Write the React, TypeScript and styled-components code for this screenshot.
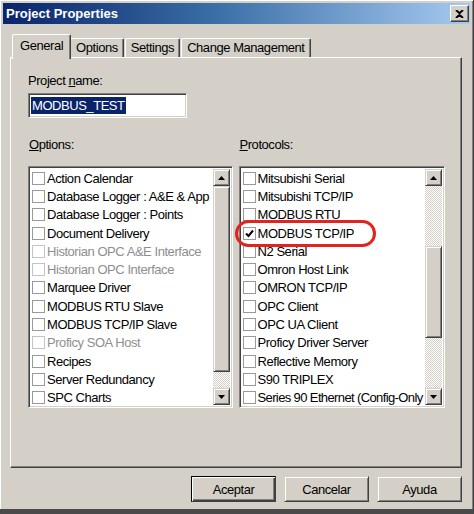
import styled, { createGlobalStyle } from "styled-components";

const GlobalStyle = createGlobalStyle`
  html, body {
    margin: 0;
    padding: 0;
    background: #d4d0c8;
  }
  body {
    font-family: "Liberation Sans", Arial, sans-serif;
    font-size: 13px;
    letter-spacing: -0.45px;
    color: #000;
  }
  * {
    box-sizing: border-box;
  }
`;

const Window = styled.div`
  width: 474px;
  height: 514px;
  padding: 3px 3px 0 3px;
  background: #d4d0c8;
  border-right: 1px solid #404040;
  border-bottom: 5px solid #4a4a4a;
  box-shadow: inset 1px 1px #ffffff, inset -1px 0 #808080;
  display: flex;
  flex-direction: column;
`;

const TitleBar = styled.div`
  height: 21px;
  display: flex;
  align-items: center;
  justify-content: space-between;
  padding: 0 1px 0 3px;
  background: linear-gradient(to right, #0a246a 0%, #3a6ea5 45%, #a6caf0 100%);
`;

const TitleText = styled.span`
  color: #fff;
  font-weight: bold;
  font-size: 13px;
  letter-spacing: 0;
`;

const CloseButton = styled.div`
  width: 19px;
  height: 17px;
  background: #d4d0c8;
  border-top: 1px solid #fff;
  border-left: 1px solid #fff;
  border-right: 1px solid #404040;
  border-bottom: 1px solid #404040;
  box-shadow: inset -1px -1px #808080;
  display: flex;
  align-items: center;
  justify-content: center;
`;

const Body = styled.div`
  padding: 10px 8px 0 7px;
  display: flex;
  flex-direction: column;
`;

const TabRow = styled.div`
  height: 23px;
  display: flex;
  align-items: flex-end;
  padding-left: 4px;
  position: relative;
  z-index: 1;
`;

const Tab = styled.div<{ $active?: boolean }>`
  height: ${(p) => (p.$active ? "25px" : "19px")};
  margin: ${(p) => (p.$active ? "0 -1px -2px -2px" : "0 1px 0 0")};
  padding: ${(p) => (p.$active ? "3px 7px 0 7px" : "1px 5px 0 5px")};
  background: #d4d0c8;
  border-top: 1px solid #fff;
  border-left: 1px solid #fff;
  border-right: 1px solid #404040;
  border-radius: 2px 2px 0 0;
  box-shadow: inset -1px 0 #808080;
  white-space: nowrap;
  position: relative;
  z-index: ${(p) => (p.$active ? 2 : 1)};
`;

const Panel = styled.div`
  height: 411px;
  background: #d4d0c8;
  border-top: 1px solid #fff;
  border-left: 1px solid #fff;
  border-right: 1px solid #404040;
  border-bottom: 1px solid #404040;
  box-shadow: inset -1px -1px #808080;
  padding: 15px 16px 0 17px;
`;

const Label = styled.div`
  height: 16px;
  line-height: 16px;
  margin-bottom: 4px;
  u {
    text-decoration: underline;
  }
`;

const NameInput = styled.div`
  width: 159px;
  height: 25px;
  background: #fff;
  border-top: 1px solid #808080;
  border-left: 1px solid #808080;
  border-right: 1px solid #fff;
  border-bottom: 1px solid #fff;
  box-shadow: inset 1px 1px #404040, inset -1px -1px #d4d0c8;
  padding: 3px 0 0 2px;
  margin-bottom: 19px;
`;

const Selected = styled.span`
  display: inline-block;
  height: 17px;
  line-height: 17px;
  padding: 0 1px;
  background: #0a246a;
  color: #fff;
`;

const Columns = styled.div`
  display: flex;
  gap: 6px;
`;

const Column = styled.div<{ $width: number }>`
  width: ${(p) => p.$width}px;
  display: flex;
  flex-direction: column;
`;

const ColumnLabel = styled(Label)`
  margin-bottom: 13px;
  padding-left: 1px;
`;

const ListWrap = styled.div`
  position: relative;
`;

const ListBox = styled.div`
  height: 242px;
  background: #fff;
  border-top: 1px solid #808080;
  border-left: 1px solid #808080;
  border-right: 1px solid #fff;
  border-bottom: 1px solid #fff;
  box-shadow: inset 1px 1px #404040, inset -1px -1px #d4d0c8;
  padding: 2px;
  display: flex;
`;

const ListItems = styled.div`
  flex: 1;
  overflow: hidden;
  padding-left: 1px;
`;

const Row = styled.div<{ $disabled?: boolean; $tight?: boolean }>`
  height: 18.3px;
  display: flex;
  align-items: center;
  gap: 2px;
  white-space: nowrap;
  letter-spacing: ${(p) => (p.$tight ? "-0.62px" : "-0.45px")};
  color: ${(p) => (p.$disabled ? "#8e8e8e" : "#000")};
`;

const Check = styled.span<{ $disabled?: boolean }>`
  flex: none;
  width: 13px;
  height: 13px;
  border: 1px solid ${(p) => (p.$disabled ? "#c4c4c4" : "#9a9a9a")};
  background: #fff;
  display: flex;
  align-items: center;
  justify-content: center;
`;

const ScrollBar = styled.div`
  width: 17px;
  display: flex;
  flex-direction: column;
`;

const ArrowButton = styled.div`
  height: 17px;
  background: #d4d0c8;
  border-top: 1px solid #d4d0c8;
  border-left: 1px solid #d4d0c8;
  border-right: 1px solid #404040;
  border-bottom: 1px solid #404040;
  box-shadow: inset 1px 1px #fff, inset -1px -1px #808080;
  display: flex;
  align-items: center;
  justify-content: center;
`;

const Track = styled.div`
  flex: 1;
  display: flex;
  flex-direction: column;
  background: repeating-conic-gradient(#d4d0c8 0 25%, #ffffff 0 50%) 0 0 / 2px 2px;
`;

const TrackGap = styled.div<{ $h: number }>`
  height: ${(p) => p.$h}px;
`;

const Thumb = styled(ArrowButton)<{ $h: number }>`
  height: ${(p) => p.$h}px;
`;

const Highlight = styled.div`
  position: absolute;
  left: -4px;
  top: 54px;
  width: 141px;
  height: 27px;
  border: 3.5px solid #e3231f;
  border-radius: 14px;
  pointer-events: none;
`;

const ButtonRow = styled.div`
  display: flex;
  justify-content: flex-end;
  gap: 8px;
  margin-top: 8px;
`;

const Button = styled.div<{ $default?: boolean }>`
  width: 85px;
  height: 26px;
  display: flex;
  align-items: center;
  justify-content: center;
  background: #d4d0c8;
  border: 1px solid ${(p) => (p.$default ? "#000" : "#d4d0c8")};
  border-right-color: #404040;
  border-bottom-color: #404040;
  box-shadow: ${(p) =>
    p.$default
      ? "inset 1px 1px #fff, inset -1px -1px #404040, inset -2px -2px #808080"
      : "inset 1px 1px #fff, inset -1px -1px #808080"};
`;

type Item = {
  label: string;
  disabled?: boolean;
  checked?: boolean;
  tight?: boolean;
};

const options: Item[] = [
  { label: "Action Calendar" },
  { label: "Database Logger : A&E & App" },
  { label: "Database Logger : Points" },
  { label: "Document Delivery" },
  { label: "Historian OPC A&E Interface", disabled: true },
  { label: "Historian OPC Interface", disabled: true },
  { label: "Marquee Driver" },
  { label: "MODBUS RTU Slave" },
  { label: "MODBUS TCP/IP Slave" },
  { label: "Proficy SOA Host", disabled: true },
  { label: "Recipes" },
  { label: "Server Redundancy" },
  { label: "SPC Charts" },
];

const protocols: Item[] = [
  { label: "Mitsubishi Serial" },
  { label: "Mitsubishi TCP/IP" },
  { label: "MODBUS RTU" },
  { label: "MODBUS TCP/IP", checked: true },
  { label: "N2 Serial" },
  { label: "Omron Host Link" },
  { label: "OMRON TCP/IP" },
  { label: "OPC Client" },
  { label: "OPC UA Client" },
  { label: "Proficy Driver Server" },
  { label: "Reflective Memory" },
  { label: "S90 TRIPLEX" },
  { label: "Series 90 Ethernet (Config-Only", tight: true },
];

function Arrow({ down }: { down?: boolean }) {
  return (
    <svg width="7" height="4" viewBox="0 0 7 4">
      <path d={down ? "M0 0H7L3.5 4Z" : "M0 4H7L3.5 0Z"} fill="#000" />
    </svg>
  );
}

function CheckList({
  items,
  before,
  thumb,
}: {
  items: Item[];
  before: number;
  thumb: number;
}) {
  return (
    <ListBox>
      <ListItems>
        {items.map((it) => (
          <Row key={it.label} $disabled={it.disabled} $tight={it.tight}>
            <Check $disabled={it.disabled}>
              {it.checked && (
                <svg width="9" height="9" viewBox="0 0 9 9">
                  <path
                    d="M1 4.5L3.5 7L8 1.5"
                    stroke="#000"
                    strokeWidth="2"
                    fill="none"
                  />
                </svg>
              )}
            </Check>
            <span>{it.label}</span>
          </Row>
        ))}
      </ListItems>
      <ScrollBar>
        <ArrowButton>
          <Arrow />
        </ArrowButton>
        <Track>
          <TrackGap $h={before} />
          <Thumb $h={thumb} />
        </Track>
        <ArrowButton>
          <Arrow down />
        </ArrowButton>
      </ScrollBar>
    </ListBox>
  );
}

export default function App() {
  return (
    <>
      <GlobalStyle />
      <Window>
        <TitleBar>
          <TitleText>Project Properties</TitleText>
          <CloseButton>
            <svg width="9" height="8" viewBox="0 0 9 8">
              <path d="M1 0L4.5 3.2L8 0M1 8L4.5 4.8L8 8" stroke="#000" strokeWidth="2" fill="none" />
            </svg>
          </CloseButton>
        </TitleBar>
        <Body>
          <TabRow>
            <Tab $active>General</Tab>
            <Tab>Options</Tab>
            <Tab>Settings</Tab>
            <Tab>Change Management</Tab>
          </TabRow>
          <Panel>
            <Label>
              Project <u>n</u>ame:
            </Label>
            <NameInput>
              <Selected>MODBUS_TEST</Selected>
            </NameInput>
            <Columns>
              <Column $width={205}>
                <ColumnLabel>
                  <u>O</u>ptions:
                </ColumnLabel>
                <CheckList items={options} before={0} thumb={186} />
              </Column>
              <Column $width={207}>
                <ColumnLabel>
                  <u>P</u>rotocols:
                </ColumnLabel>
                <ListWrap>
                  <CheckList items={protocols} before={60} thumb={92} />
                  <Highlight />
                </ListWrap>
              </Column>
            </Columns>
          </Panel>
          <ButtonRow>
            <Button $default>Aceptar</Button>
            <Button>Cancelar</Button>
            <Button>Ayuda</Button>
          </ButtonRow>
        </Body>
      </Window>
    </>
  );
}
